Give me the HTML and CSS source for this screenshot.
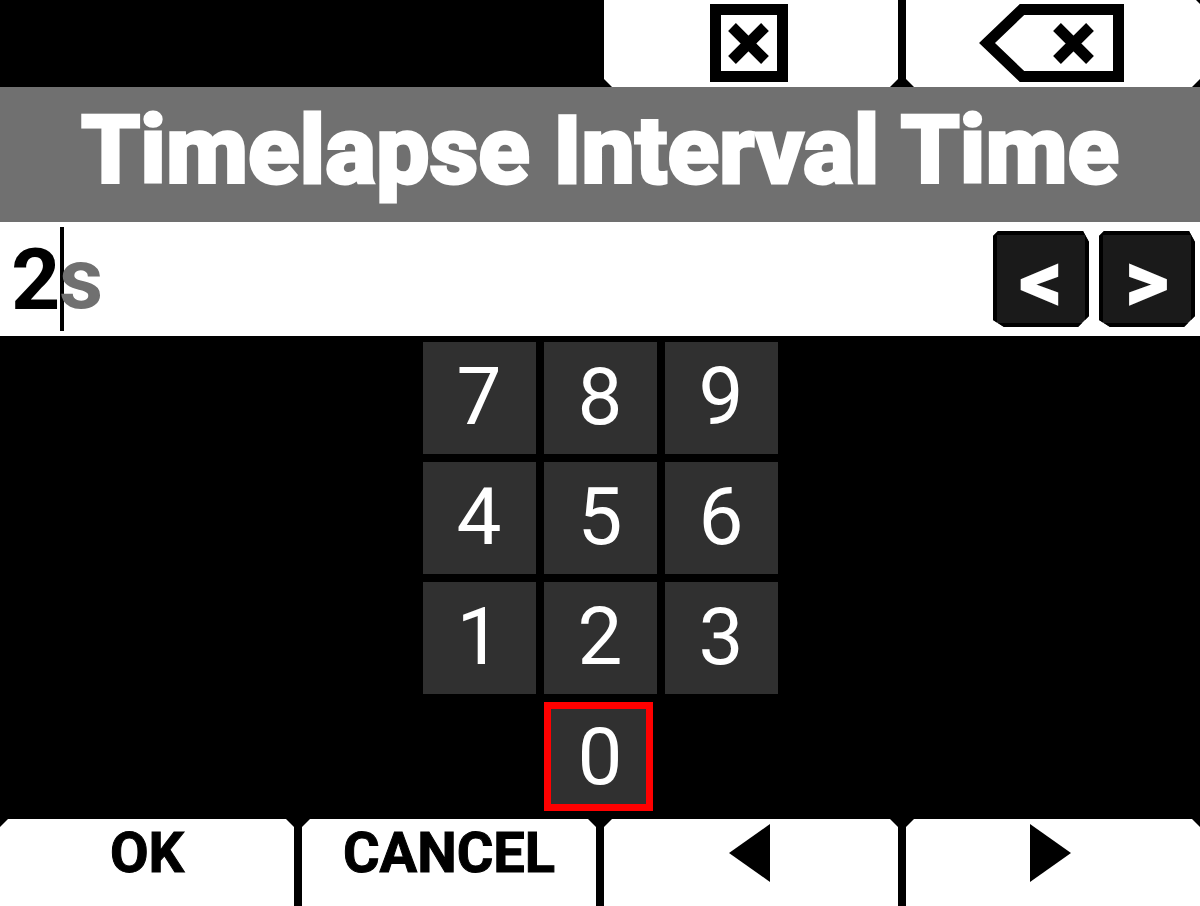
FILE: index.html
```html
<!doctype html>
<html lang="en" dir="ltr">
<head>
  <meta charset="utf-8" />
  <meta name="viewport" content="width=device-width, initial-scale=1" />
  <title>Timelapse Interval Time</title>
  <link rel="stylesheet" href="styles.css">
</head>
<body>

<form class="screen">
  <div class="softkeys softkeys-top">
    <button class="softkey softkey-icon clear" type="button" aria-label="Clear">
      <svg width="78" height="78" viewBox="0 0 78 78" fill="none" stroke="#000">
        <path d="M5.5 5.5H72.5V72.5H5.5Z" stroke-width="11" />
        <path d="M22 23L55 56M55 23L22 56" stroke-width="11" />
      </svg>
    </button>
    <button class="softkey softkey-icon backspace" type="button" aria-label="Backspace">
      <svg width="148" height="78" viewBox="0 0 148 78" fill="none" stroke="#000">
        <path d="M10 39L45 5.5H141.5V72.5H45Z" stroke-width="11" />
        <path d="M80 23L113 56M113 23L80 56" stroke-width="11" />
      </svg>
    </button>
  </div>

  <h1 class="title"><label for="interval">Timelapse Interval Time</label></h1>

  <div class="entry">
    <div class="value">
      <input type="text" id="interval" name="interval" value="2" inputmode="numeric" />
      <span class="caret"></span>
      <span class="unit">s</span>
    </div>
    <button class="step" type="button">&lt;</button>
    <button class="step" type="button">&gt;</button>
  </div>

  <div class="keypad">
    <button class="key" type="button">7</button>
    <button class="key" type="button">8</button>
    <button class="key" type="button">9</button>
    <button class="key" type="button">4</button>
    <button class="key" type="button">5</button>
    <button class="key" type="button">6</button>
    <button class="key" type="button">1</button>
    <button class="key" type="button">2</button>
    <button class="key" type="button">3</button>
    <button class="key zero selected" type="button">0</button>
  </div>

  <div class="softkeys softkeys-bottom">
    <button class="softkey" type="submit">OK</button>
    <button class="softkey" type="button">CANCEL</button>
    <button class="softkey softkey-icon" type="button" aria-label="Left">
      <svg width="42" height="60" viewBox="0 0 42 60"><path d="M1 30L42 1V59Z" /></svg>
    </button>
    <button class="softkey softkey-icon" type="button" aria-label="Right">
      <svg width="42" height="60" viewBox="0 0 42 60"><path d="M0 1L41 30L0 59Z" /></svg>
    </button>
  </div>
</form>

</body>
</html>
```

FILE: styles.css
```css
* {
  box-sizing: border-box;
}
body {
  margin: 0;
  background-color: #000;
  font-family: Roboto, sans-serif;
}
button,
input {
  margin: 0;
  padding: 0;
  border: 0;
  border-radius: 0;
  font-family: inherit;
  color: inherit;
}
button {
  cursor: pointer;
}
svg {
  display: block;
}
.screen {
  display: flex;
  flex-direction: column;
  min-height: 100vh;
}

/* Soft keys along the top and bottom edges */
.softkeys {
  display: grid;
  grid-template-columns: repeat(4, 1fr);
  column-gap: 8px;
}
.softkey {
  display: flex;
  justify-content: center;
  align-items: flex-start;
  height: 87px;
  padding-top: 4px;
  background-color: #fff;
  color: #000;
  font-size: 56px;
  font-weight: 700;
  line-height: 60px;
  -webkit-text-stroke: 1px #000;
}
.softkey-icon {
  padding-right: 4px;
}
.clear {
  grid-column-start: 3;
  clip-path: polygon(0 0, 100% 0, 100% calc(100% - 8px), calc(100% - 8px) 100%, 8px 100%, 0 calc(100% - 8px));
}
.backspace {
  clip-path: polygon(0 0, calc(100% - 4px) 0, 100% 4px, 100% calc(100% - 8px), calc(100% - 8px) 100%, 8px 100%, 0 calc(100% - 8px));
}
.softkeys-bottom .softkey {
  clip-path: polygon(8px 0, calc(100% - 8px) 0, 100% 8px, 100% 100%, 0 100%, 0 8px);
}

.title {
  margin: 0;
  padding: 4px 0 11px;
  background-color: #707070;
  color: #fff;
  font-size: 95px;
  font-weight: 800;
  line-height: 120px;
  text-align: center;
  -webkit-text-stroke: 3px #fff;
}

.entry {
  display: flex;
  align-items: center;
  gap: 10px;
  height: 114px;
  padding: 0 5px 0 11px;
  background-color: #fff;
}
.value {
  position: relative;
  display: flex;
  flex: 1;
  font-size: 86px;
  font-weight: 700;
  line-height: 114px;
}
.value input {
  width: 48px;
  height: 114px;
  background: none;
  color: #000;
  font-size: inherit;
  font-weight: inherit;
  outline: none;
}
.caret {
  position: absolute;
  top: 5px;
  left: 49px;
  width: 4px;
  height: 104px;
  background-color: #000;
}
.unit {
  position: relative;
  color: #707070;
}
.step {
  width: 96px;
  height: 96px;
  padding-top: 6px;
  border: 4px solid #000;
  background-color: #1a1a1a;
  color: #fff;
  font-size: 84px;
  font-weight: 700;
  line-height: 82px;
  -webkit-text-stroke: 2px #fff;
  clip-path: polygon(5px 0, calc(100% - 6px) 0, 100% 11px, 100% calc(100% - 11px), calc(100% - 11px) 100%, 11px 100%, 0 calc(100% - 7px), 0 5px);
}

.keypad {
  display: grid;
  flex: 1;
  grid-template-columns: repeat(3, 113px);
  gap: 8px;
  justify-content: center;
  align-content: start;
  padding: 6px 0 8px;
}
.key {
  height: 112px;
  padding-bottom: 2px;
  background-color: #303030;
  color: #fff;
  font-size: 80px;
  font-weight: 400;
  line-height: 110px;
}
.zero {
  grid-column-start: 2;
}
.selected {
  width: 109px;
  height: 109px;
  padding: 0 0 0 4px;
  border: 7px solid #f00;
  line-height: 94px;
}
```
